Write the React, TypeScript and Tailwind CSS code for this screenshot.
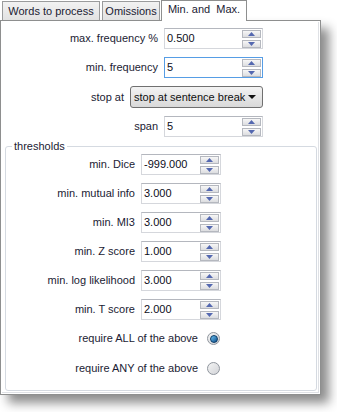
import React from 'react';

const Spinner: React.FC = () => (
  <div className="flex flex-col gap-[2px] pr-px">
    {['up', 'down'].map((dir) => (
      <div
        key={dir}
        className="w-[19px] h-[8px] border border-[#b5b8bf] bg-gradient-to-b from-[#f7f7f7] to-[#dcdde0] flex items-center justify-center"
      >
        <svg width="7" height="4" viewBox="0 0 7 4">
          {dir === 'up' ? (
            <path d="M0 4 L3.5 0 L7 4 Z" fill="#5468b0" />
          ) : (
            <path d="M0 0 L3.5 4 L7 0 Z" fill="#5468b0" />
          )}
        </svg>
      </div>
    ))}
  </div>
);

const SpinField: React.FC<{ value: string; width: string; focused?: boolean }> = ({ value, width, focused }) => (
  <div
    className={`${width} h-[21px] flex items-center bg-white border ${
      focused ? 'border-[#569de5]' : 'border-[#d5d7dc] border-t-[#b4b7be]'
    }`}
  >
    <span className="flex-1 pl-[2px] text-[#0d0d1a]">{value}</span>
    <Spinner />
  </div>
);

const Row: React.FC<{ label: string; children: React.ReactNode }> = ({ label, children }) => (
  <div className="flex items-center justify-end gap-[6px]">
    <span>{label}</span>
    {children}
  </div>
);

const Radio: React.FC<{ checked?: boolean }> = ({ checked }) => (
  <div className="w-[13px] h-[13px] rounded-full border border-[#8f959d] bg-gradient-to-br from-[#f4f4f4] to-[#d2d4d8] flex items-center justify-center">
    {checked && (
      <div className="w-[8px] h-[8px] rounded-full bg-gradient-to-br from-[#6cc4f5] to-[#0d4f8a] border border-[#0a3a66]" />
    )}
  </div>
);

export default function App() {
  const thresholds = [
    { label: 'min. Dice', value: '-999.000' },
    { label: 'min. mutual info', value: '3.000' },
    { label: 'min. MI3', value: '3.000' },
    { label: 'min. Z score', value: '1.000' },
    { label: 'min. log likelihood', value: '3.000' },
    { label: 'min. T score', value: '2.000' },
  ];

  return (
    <div className="w-[337px] h-[412px] bg-white text-[11px] leading-none text-[#1b1b33] font-['Liberation_Sans',Arial,sans-serif]">
      {/* tab strip */}
      <div className="flex items-end pl-[2px] h-[20px]">
        <div className="w-[98px] h-[19px] flex items-center justify-center border border-b-0 border-[#9a9b9c] bg-gradient-to-b from-[#f2f2f2] to-[#e2e2e2]">
          Words to process
        </div>
        <div className="ml-[2px] w-[58px] h-[19px] flex items-center justify-center border border-b-0 border-[#9a9b9c] bg-gradient-to-b from-[#f2f2f2] to-[#e2e2e2]">
          Omissions
        </div>
        <div className="ml-px relative z-10 w-[86px] h-[21px] -mb-px pb-[3px] flex items-center justify-center border border-b-0 border-[#8e8f8f] bg-white">
          Min. and&nbsp; Max.
        </div>
      </div>

      {/* panel */}
      <div className="w-[321px] h-[375px] border border-[#8e8f8f] bg-white shadow-[8px_8px_10px_rgba(0,0,0,0.45)] p-px">
        <div className="h-full border-r border-b border-[#dfe1e5] pt-[6px] flex flex-col">
          <div className="flex flex-col gap-[8px] pr-[55px]">
            <Row label="max. frequency %">
              <SpinField value="0.500" width="w-[99px]" />
            </Row>
            <Row label="min. frequency">
              <SpinField value="5" width="w-[99px]" focused />
            </Row>
            <Row label="stop at">
              <div className="w-[133px] h-[22px] rounded-[3px] border border-[#707070] bg-gradient-to-b from-[#f3f3f3] to-[#d9d9d9] flex items-center pl-[3px] pr-[6px]">
                <span className="flex-1 text-[#101010]">stop at sentence break</span>
                <svg width="8" height="4" viewBox="0 0 8 4">
                  <path d="M0 0 L4 4 L8 0 Z" fill="#111" />
                </svg>
              </div>
            </Row>
            <Row label="span">
              <SpinField value="5" width="w-[99px]" />
            </Row>
          </div>

          {/* thresholds group */}
          <fieldset className="mt-[3px] ml-[3px] w-[312px] h-[251px] border border-[#d5dae1] rounded-[3px] px-0 pt-0">
            <legend className="ml-[6px] px-[2px] leading-[13px]">thresholds</legend>
            <div className="flex flex-col gap-[8px] pr-[95px] pt-[1px]">
              {thresholds.map((t) => (
                <Row key={t.label} label={t.label}>
                  <SpinField value={t.value} width="w-[80px]" />
                </Row>
              ))}
            </div>
            <div className="flex flex-col gap-[17px] pr-[96px] mt-[12px]">
              <div className="flex items-center justify-end gap-[9px]">
                <span>require ALL of the above</span>
                <Radio checked />
              </div>
              <div className="flex items-center justify-end gap-[9px]">
                <span>require ANY of the above</span>
                <Radio />
              </div>
            </div>
          </fieldset>
        </div>
      </div>
    </div>
  );
}
